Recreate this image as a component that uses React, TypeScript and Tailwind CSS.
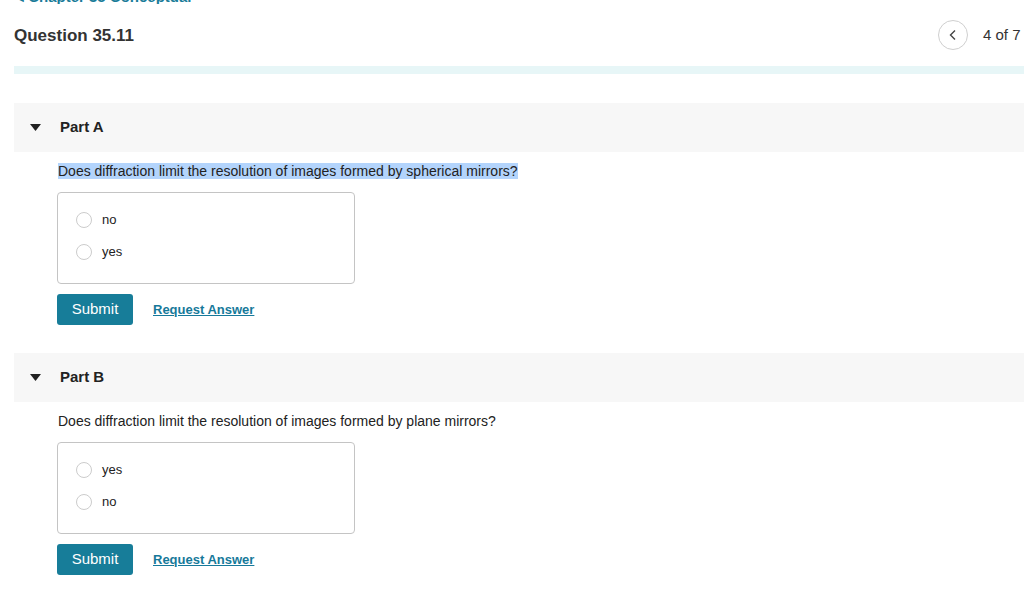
import React from 'react';

const font = { fontFamily: '"Liberation Sans", Arial, Helvetica, sans-serif' };

function Caret() {
  return (
    <svg width="11" height="7" viewBox="0 0 11 7" className="shrink-0">
      <path d="M0 0 L11 0 L5.5 7 Z" fill="#222" />
    </svg>
  );
}

function Radio({ label }: { label: string }) {
  return (
    <label className="flex items-center h-[32px]">
      <span className="w-[16px] h-[16px] rounded-full border border-[#cccccc] bg-white ml-[18px]" />
      <span className="ml-[10px] text-[13px] text-[#222]">{label}</span>
    </label>
  );
}

function Part({ name, question, options, selected }: { name: string; question: string; options: string[]; selected?: boolean }) {
  return (
    <section>
      <div className="flex items-center h-[49px] bg-[#f7f7f7] pl-[16px]">
        <Caret />
        <span className="ml-[19px] text-[15px] font-bold text-[#222]">{name}</span>
      </div>
      <div className="pl-[43px] pt-[11px]">
        <p className="text-[14px] leading-[17px] text-[#222] ml-[1px]">
          <span className={selected ? 'bg-[#b3d4fc]' : ''}>{question}</span>
        </p>
        <div className="mt-[12px] w-[298px] h-[92px] border border-[#c4c4c4] rounded-[4px] pt-[11px]">
          {options.map((o) => (
            <Radio key={o} label={o} />
          ))}
        </div>
        <div className="flex items-center mt-[10px]">
          <button className="w-[76px] h-[31px] rounded-[3px] bg-[#177d99] text-white text-[15px]">Submit</button>
          <a className="ml-[20px] text-[13px] font-bold text-[#16799a] underline">Request Answer</a>
        </div>
      </div>
    </section>
  );
}

export default function App() {
  return (
    <div className="w-[1024px] h-[607px] overflow-hidden bg-white" style={font}>
      <div className="h-[4px] overflow-hidden relative">
        <div className="absolute left-[16px] top-[-13px] text-[15px] leading-[20px] font-bold text-[#1a7c99] whitespace-nowrap">
          ◂ Chapter 35 Conceptual
        </div>
      </div>
      <div className="pl-[14px]">
        <div className="flex items-center justify-between h-[62px]">
          <h1 className="text-[17px] font-bold text-[#333] mt-[1px]">Question 35.11</h1>
          <div className="flex items-center">
            <button className="w-[30px] h-[30px] rounded-full border border-[#cfcfcf] flex items-center justify-center">
              <svg width="10" height="12" viewBox="0 0 10 12">
                <path d="M7 1.5 L2.5 6 L7 10.5" fill="none" stroke="#444" strokeWidth="1.4" />
              </svg>
            </button>
            <span className="ml-[15px] text-[15px] text-[#333] w-[41px] whitespace-nowrap">4 of 7</span>
          </div>
        </div>
        <div className="h-[8px] bg-[#e7f6f7]" />
        <div className="mt-[29px]">
          <Part
            name="Part A"
            question="Does diffraction limit the resolution of images formed by spherical mirrors?"
            options={['no', 'yes']}
            selected
          />
        </div>
        <div className="mt-[28px]">
          <Part
            name="Part B"
            question="Does diffraction limit the resolution of images formed by plane mirrors?"
            options={['yes', 'no']}
          />
        </div>
      </div>
    </div>
  );
}
